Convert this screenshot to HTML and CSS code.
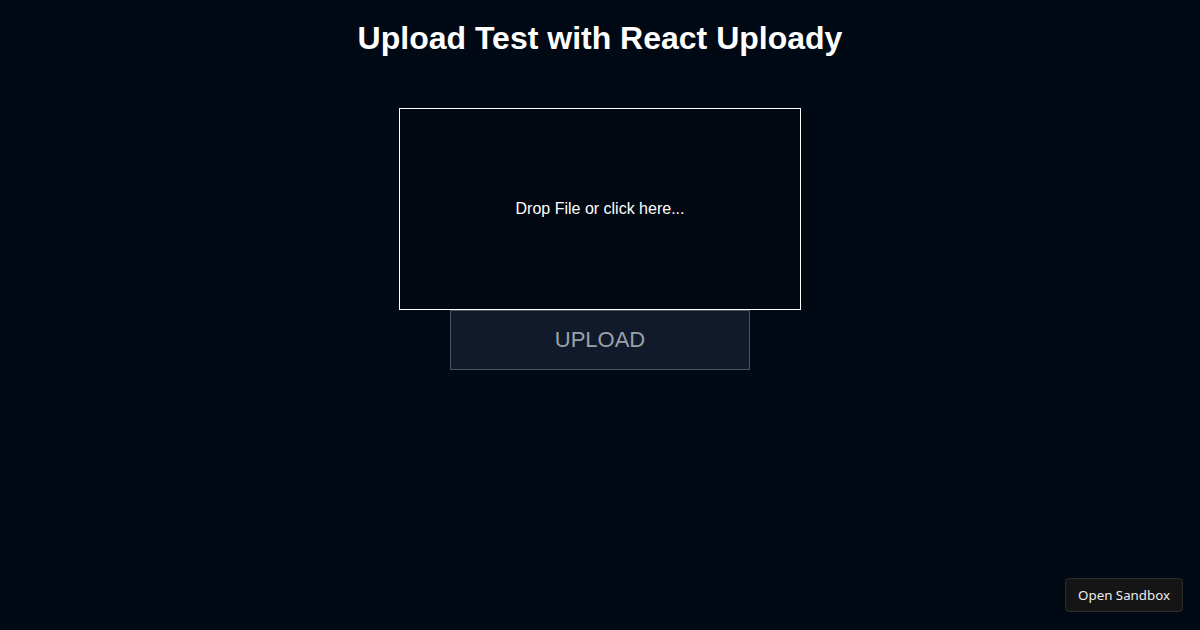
FILE: index.html
```html
<!DOCTYPE html>
<html>

<head>
    <meta charset="UTF-8">
    <meta name="viewport" content="width=device-width, initial-scale=1.0">
    <title>Upload Test with React Uploady</title>
    <link rel="stylesheet" href="styles.css">
</head>

<body>
    <div class="app">
        <h1 class="title">Upload Test with React Uploady</h1>
        <div class="uploader">
            <div class="drop-zone">Drop File or click here...</div>
            <button class="upload-btn">UPLOAD</button>
        </div>
    </div>
    <a class="sandbox-link" href="#">Open Sandbox</a>
</body>

</html>
```

FILE: styles.css
```css
body {
    margin: 0;
    background-color: #010915;
    color: #ffffff;
    font-family: "Liberation Sans", Arial, sans-serif;
    height: 630px;
}

.app {
    display: flex;
    flex-direction: column;
    align-items: center;
    padding-top: 20px;
}

.title {
    margin: 0;
    font-size: 32px;
    font-weight: bold;
    line-height: 37px;
}

.uploader {
    display: flex;
    flex-direction: column;
    align-items: center;
    margin-top: 51px;
}

.drop-zone {
    width: 400px;
    height: 200px;
    border: 1px solid #ffffff;
    background-color: #020812;
    display: flex;
    justify-content: center;
    align-items: center;
    font-size: 16px;
    cursor: pointer;
}

.upload-btn {
    width: 300px;
    height: 60px;
    background-color: #111a2b;
    border: 1px solid #4b5260;
    color: #9ca0a8;
    font-family: "Liberation Sans", Arial, sans-serif;
    font-size: 22px;
    cursor: pointer;
}

.sandbox-link {
    position: fixed;
    right: 17px;
    bottom: 18px;
    padding: 7px 12px;
    background-color: #151515;
    border: 1px solid #2c2c2c;
    border-radius: 4px;
    color: #ececec;
    font-family: "Noto Sans", sans-serif;
    font-size: 13.3px;
    line-height: 18px;
    text-decoration: none;
}
```
